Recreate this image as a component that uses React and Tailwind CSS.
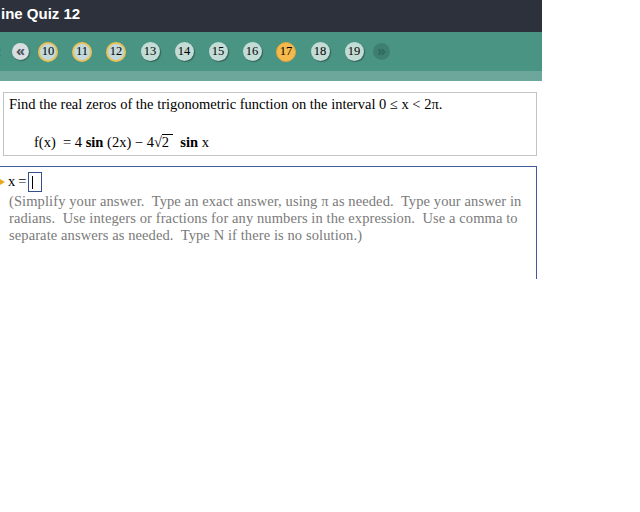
import React from "react";

const serif = { fontFamily: '"Liberation Serif", "Times New Roman", serif' };

function Circle({ n, kind }) {
  let cls = "";
  if (kind === "done")
    cls = "w-[20px] h-[20px] bg-[#c3d9dc] border-[2px] border-[#e9c35a]";
  else if (kind === "cur")
    cls = "w-[20px] h-[20px] bg-[#f6b94c] border border-[#e2a53c]";
  else cls = "w-[19px] h-[19px] bg-[#c4dcd6] shadow-[1px_1px_1px_rgba(0,0,0,0.35)]";
  return (
    <div className="w-[34px] flex justify-center items-center">
      <div
        className={`${cls} rounded-full flex items-center justify-center text-[12.5px] text-black leading-none`}
        style={serif}
      >
        {n}
      </div>
    </div>
  );
}

export default function App() {
  const items = [
    [10, "done"],
    [11, "done"],
    [12, "done"],
    [13, "n"],
    [14, "n"],
    [15, "n"],
    [16, "n"],
    [17, "cur"],
    [18, "n"],
    [19, "n"],
  ];
  return (
    <div className="w-[640px] h-[512px] bg-white overflow-hidden">
      <div className="w-[542px]">
        <div
          className="h-[32px] bg-[#2c313c] flex items-center pb-[4px] pl-[1px] text-white font-bold text-[15px]"
          style={{ fontFamily: '"Liberation Sans", Arial, sans-serif' }}
        >
          ine Quiz 12
        </div>
        <div className="h-[39px] bg-[#4a9484] flex items-center overflow-hidden">
          <span
            className="ml-[-3px] w-[6px] text-[13px] font-bold text-[#2c3b3a]"
            style={{ fontFamily: '"Liberation Sans", Arial, sans-serif' }}
          >
            :
          </span>
          <div className="ml-[9px] w-[17px] h-[17px] rounded-full bg-[#d9dfe0] flex items-center justify-center text-[15px] font-bold text-[#4a5560] leading-none tracking-[-2px] shadow-[1px_1px_1px_rgba(0,0,0,0.3)]">
            <span className="mt-[-2px] mr-[2px]">‹‹</span>
          </div>
          <div className="ml-[2px] flex">
            {items.map(([n, k]) => (
              <Circle key={n} n={n} kind={k} />
            ))}
          </div>
          <div className="ml-[2px] w-[17px] h-[17px] rounded-full bg-[#3e7f71] flex items-center justify-center text-[15px] font-bold text-[#2f6a5d] leading-none tracking-[-2px]">
            <span className="mt-[-2px] mr-[2px]">››</span>
          </div>
        </div>
        <div className="h-[10px] bg-[#6da69a]" />
      </div>

      <div className="pt-[11px] pl-[3px]" style={serif}>
        <div className="w-[534px] h-[64px] border border-[#c4c4c4] pl-[5px] pt-[3px] text-[14.5px] text-black">
          <div className="leading-[17px]">
            Find the real zeros of the trigonometric function on the interval 0 ≤ x &lt; 2π.
          </div>
          <div className="mt-[21px] ml-[25px] leading-[17px] flex items-baseline whitespace-pre">
            <span>f(x)  = 4 </span>
            <span className="font-bold">sin</span>
            <span> (2x) − 4</span>
            <span>√</span>
            <span className="border-t border-black leading-[15px] pr-[4px]">2</span>
            <span>  </span>
            <span className="font-bold">sin</span>
            <span> x</span>
          </div>
        </div>
      </div>

      <div className="mt-[10px] ml-[-4px] w-[541px] h-[113px] border border-[#3f5b9c] border-b-0" style={serif}>
        <div className="flex items-center mt-[5px] h-[20px]">
          <div className="ml-[3px] w-0 h-0 border-y-[3px] border-y-transparent border-l-[5px] border-l-[#e8a820]" />
          <span className="ml-[3px] text-[14.5px] text-black">x</span>
          <span className="ml-[3px] text-[14.5px] text-black">=</span>
          <div className="ml-[2px] w-[14px] h-[20px] border border-[#334f8c] flex items-center pl-[3px]">
            <div className="w-[1px] h-[13px] bg-black" />
          </div>
        </div>
        <div className="ml-[12px] mt-[1px] text-[14.5px] leading-[17px] text-[#7a7a7a] whitespace-pre tracking-[0.1px]">
          <div>(Simplify your answer.  Type an exact answer, using π as needed.  Type your answer in</div>
          <div>radians.  Use integers or fractions for any numbers in the expression.  Use a comma to</div>
          <div>separate answers as needed.  Type N if there is no solution.)</div>
        </div>
      </div>
    </div>
  );
}
